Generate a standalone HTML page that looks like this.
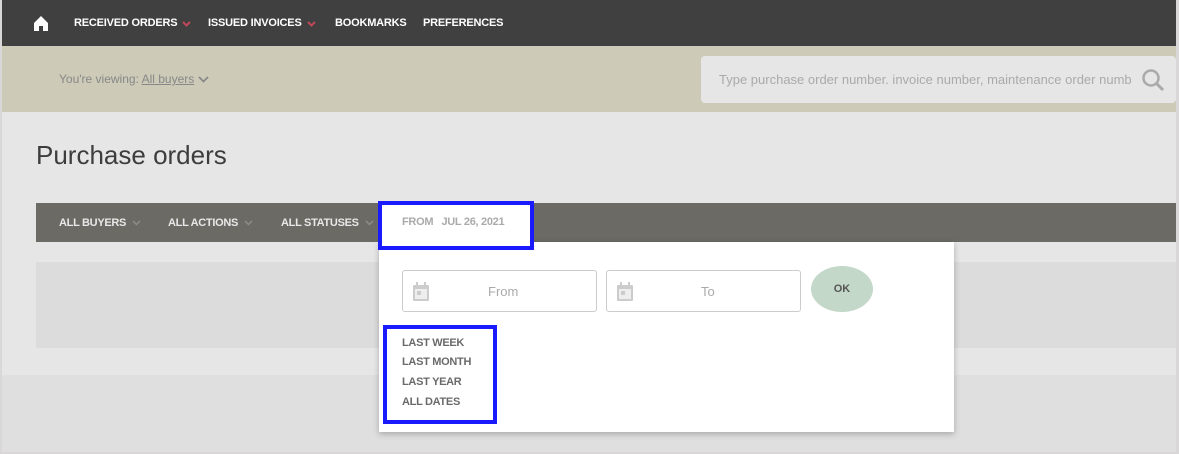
<!DOCTYPE html>
<html><head><meta charset="utf-8"><style>
*{margin:0;padding:0;box-sizing:border-box}
body{width:1179px;height:454px;overflow:hidden;background:#d9d7d7;font-family:"Liberation Sans",sans-serif;position:relative}
.abs{position:absolute}
.nav{left:2px;top:0;width:1174px;height:46px;background:#404040}
.nav span{position:absolute;top:17px;color:#fff;font-size:11px;font-weight:bold;letter-spacing:-0.2px;white-space:nowrap}
.nav svg.c{margin-left:5px;vertical-align:-1px}
.tan{left:2px;top:46px;width:1174px;height:66px;background:#cdcab7}
.main{left:2px;top:112px;width:1174px;height:263px;background:#e6e6e6}
.low{left:2px;top:375px;width:1174px;height:77px;background:#dfdfdf}
.fbar{left:36px;top:203px;width:1140px;height:39px;background:#6b6a64}
.fbar span{position:absolute;top:14px;font-size:11px;font-weight:bold;color:#e8e8e8;letter-spacing:-0.3px;white-space:nowrap}
.fbar svg{margin-left:6px;vertical-align:0}
.dd{left:379px;top:242px;width:575px;height:190px;background:#fff;box-shadow:0 2px 6px rgba(0,0,0,.25)}
.inp{position:absolute;top:28px;width:195px;height:42px;border:1px solid #ccc;border-radius:3px;color:#aaa;font-size:13px}
.inp b{position:absolute;top:13px;font-weight:normal}
.inp svg{position:absolute;left:9px;top:11px}
.blue{border:4px solid #1a1aff}
.ql{position:absolute;left:23px;font-size:11px;font-weight:bold;color:#6a6a6a;letter-spacing:-0.3px}
</style></head><body>
<div class="abs nav">
<svg class="abs" style="left:31px;top:15px" width="16" height="16" viewBox="0 0 16 16"><path d="M8 1 L15 8 L15 16 L10 16 L10 11 L6 11 L6 16 L1 16 L1 8 Z" fill="#fff"/></svg>
<span style="left:72px">RECEIVED ORDERS<svg class="c" width="9" height="6" viewBox="0 0 9 6"><path d="M1 1 L4.5 4.5 L8 1" fill="none" stroke="#c0485a" stroke-width="2"/></svg></span>
<span style="left:206px">ISSUED INVOICES<svg class="c" width="9" height="6" viewBox="0 0 9 6"><path d="M1 1 L4.5 4.5 L8 1" fill="none" stroke="#c0485a" stroke-width="2"/></svg></span>
<span style="left:333px">BOOKMARKS</span>
<span style="left:421px">PREFERENCES</span>
</div>
<div class="abs tan">
<div class="abs" style="left:57px;top:26px;font-size:12px;color:#888;white-space:nowrap">You're viewing: <u>All buyers</u> <svg width="11" height="7" viewBox="0 0 11 7"><path d="M1 1 L5.5 5.5 L10 1" fill="none" stroke="#888" stroke-width="1.8"/></svg></div>
<div class="abs" style="left:699px;top:10px;width:475px;height:47px;background:#e6e6e6;border-radius:4px">
<div class="abs" style="left:18px;top:16px;font-size:13px;color:#aaa;white-space:nowrap;width:412px;overflow:hidden">Type purchase order number. invoice number, maintenance order numbe</div>
<svg class="abs" style="left:440px;top:12px" width="24" height="24" viewBox="0 0 24 24"><circle cx="10" cy="10" r="7.5" fill="none" stroke="#aaa" stroke-width="2.5"/><path d="M15.5 15.5 L22 22" stroke="#aaa" stroke-width="3"/></svg>
</div></div>
<div class="abs main"></div>
<div class="abs low"></div>
<div class="abs" style="left:36px;top:140px;font-size:26px;color:#3d3d3d">Purchase orders</div>
<div class="abs fbar">
<span style="left:23px">ALL BUYERS<svg width="9" height="6" viewBox="0 0 9 6"><path d="M1 1 L4.5 4.5 L8 1" fill="none" stroke="#8e8d88" stroke-width="1.5"/></svg></span>
<span style="left:132px">ALL ACTIONS<svg width="9" height="6" viewBox="0 0 9 6"><path d="M1 1 L4.5 4.5 L8 1" fill="none" stroke="#8e8d88" stroke-width="1.5"/></svg></span>
<span style="left:245px">ALL STATUSES<svg width="9" height="6" viewBox="0 0 9 6"><path d="M1 1 L4.5 4.5 L8 1" fill="none" stroke="#8e8d88" stroke-width="1.5"/></svg></span>
</div>
<div class="abs" style="left:36px;top:262px;width:1140px;height:86px;background:#dcdcdc"></div>
<div class="abs dd">
<div class="inp" style="left:23px"><svg width="18" height="20" viewBox="0 0 18 20"><rect x="1" y="3" width="16" height="16" rx="1" fill="#ccc"/><rect x="3" y="7" width="12" height="10" fill="#eee"/><rect x="5" y="9" width="4" height="4" fill="#ccc"/><rect x="4" y="0" width="2" height="4" fill="#ccc"/><rect x="12" y="0" width="2" height="4" fill="#ccc"/></svg><b style="left:85px">From</b></div>
<div class="inp" style="left:227px"><svg width="18" height="20" viewBox="0 0 18 20"><rect x="1" y="3" width="16" height="16" rx="1" fill="#ccc"/><rect x="3" y="7" width="12" height="10" fill="#eee"/><rect x="5" y="9" width="4" height="4" fill="#ccc"/><rect x="4" y="0" width="2" height="4" fill="#ccc"/><rect x="12" y="0" width="2" height="4" fill="#ccc"/></svg><b style="left:94px">To</b></div>
<div class="abs" style="left:432px;top:24px;width:62px;height:46px;border-radius:50%;background:#c3d8c9;color:#555;font-size:11px;font-weight:bold;text-align:center;line-height:46px">OK</div>
<div class="ql" style="top:95px">LAST WEEK</div>
<div class="ql" style="top:114px">LAST MONTH</div>
<div class="ql" style="top:134px">LAST YEAR</div>
<div class="ql" style="top:154px">ALL DATES</div>
</div>
<div class="abs blue" style="left:378px;top:201px;width:156px;height:49px;background:#fff">
<div class="abs" style="left:20px;top:11px;font-size:11px;font-weight:bold;color:#aaa;white-space:nowrap;letter-spacing:-0.3px">FROM&nbsp;&nbsp;&nbsp;JUL 26, 2021</div></div>
<div class="abs blue" style="left:383px;top:325px;width:114px;height:99px"></div>
</body></html>
